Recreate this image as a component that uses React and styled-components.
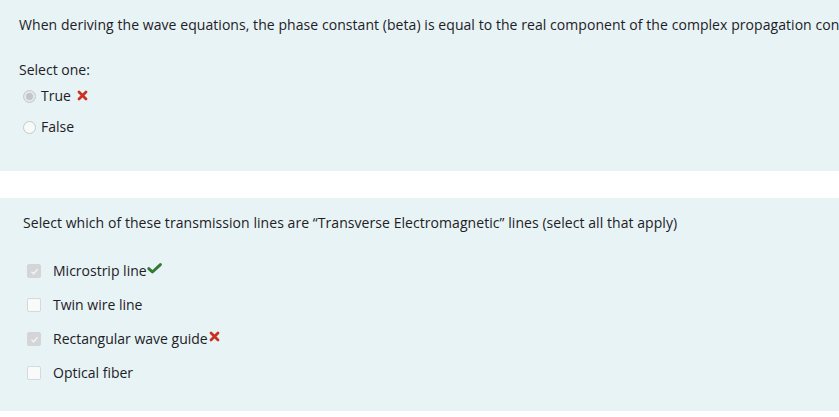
// Libraries
import styled, { createGlobalStyle } from "styled-components";

const GlobalStyle = createGlobalStyle`
  html, body {
    margin: 0;
    padding: 0;
    background-color: #ffffff;
  }

  body {
    font-family: "Open Sans", "Noto Sans", sans-serif;
    color: #1d2125;
    overflow: hidden;
  }
`;

// Styling
const Page = styled.main`
  display: flex;
  flex-direction: column;
  gap: 27px;
  width: 839px;
  height: 417px;
`;

const Card = styled.section`
  background-color: #e7f3f5;
  height: ${({ height }) => height}px;
  padding: ${({ pad }) => pad};
  box-sizing: border-box;
  overflow: hidden;
`;

const Prompt = styled.p`
  margin: 0;
  font-size: 14px;
  letter-spacing: 0.06px;
  line-height: 20px;
  white-space: nowrap;
`;

const Hint = styled.p`
  margin: 25px 0 0;
  font-size: 14px;
  line-height: 20px;
`;

const Options = styled.div`
  display: flex;
  flex-direction: column;
  gap: ${({ gap }) => gap}px;
  margin-top: ${({ top }) => top}px;
  padding-left: ${({ indent }) => indent}px;
`;

const Option = styled.label`
  display: flex;
  align-items: center;
  height: 20px;
  gap: ${({ gap }) => gap}px;
  font-size: 14px;
  line-height: 20px;
`;

const Text = styled.span`
  display: inline-flex;
  align-items: center;
`;

const Radio = styled.span`
  display: inline-flex;
  align-items: center;
  justify-content: center;
  width: 11px;
  height: 11px;
  border-radius: 50%;
  border: 1px solid #c6c9cb;
  background-color: ${({ checked }) => (checked ? "#e4e6e7" : "#f8f9f9")};

  &::after {
    content: "";
    display: ${({ checked }) => (checked ? "block" : "none")};
    width: 7px;
    height: 7px;
    border-radius: 50%;
    background-color: #c3c6c8;
  }
`;

const Box = styled.span`
  display: inline-flex;
  align-items: center;
  justify-content: center;
  width: 12px;
  height: 12px;
  border-radius: 2px;
  border: 1px solid ${({ checked }) => (checked ? "#d3d5d6" : "#d6d8da")};
  background-color: ${({ checked }) => (checked ? "#d3d5d6" : "#f9fafa")};
`;

const Mark = styled.svg`
  display: block;
  margin-left: ${({ gap }) => gap}px;
  transform: translateY(${({ lift }) => lift}px);
  flex-shrink: 0;
`;

function Cross({ gap, lift }) {
  return (
    <Mark gap={gap} lift={lift} width="11" height="11" viewBox="0 0 11 11">
      <path
        d="M2 2 L9 9 M9 2 L2 9"
        stroke="#ca3120"
        strokeWidth="2.8"
        strokeLinecap="round"
      />
    </Mark>
  );
}

function Tick({ gap, lift }) {
  return (
    <Mark gap={gap} lift={lift} width="15" height="11" viewBox="0 0 15 11">
      <path
        d="M1.8 5.6 L5.4 9 L13.4 1.6"
        fill="none"
        stroke="#357a32"
        strokeWidth="2.9"
        strokeLinejoin="round"
        strokeLinecap="round"
      />
    </Mark>
  );
}

function BoxTick() {
  return (
    <svg width="9" height="9" viewBox="0 0 9 9">
      <path
        d="M1.5 4.8 L3.6 6.8 L7.6 2.2"
        fill="none"
        stroke="#f2f3f3"
        strokeWidth="1.5"
      />
    </svg>
  );
}

const choices = [
  { label: "Microstrip line", checked: true, mark: "ok" },
  { label: "Twin wire line", checked: false },
  { label: "Rectangular wave guide", checked: true, mark: "bad" },
  { label: "Optical fiber", checked: false },
];

function App() {
  return (
    <>
      <GlobalStyle />
      <Page>
        <Card height={171} pad="15px 0 0 19px">
          <Prompt>
            When deriving the wave equations, the phase constant (beta) is
            equal to the real component of the complex propagation constant
            (gamma).
          </Prompt>
          <Hint>Select one:</Hint>
          <Options gap={11} top={6} indent={4}>
            <Option gap={5}>
              <Radio checked />
              <Text>
                True
                <Cross gap={6} lift={-1} />
              </Text>
            </Option>
            <Option gap={5}>
              <Radio />
              <Text>False</Text>
            </Option>
          </Options>
        </Card>

        <Card height={213} pad="15px 0 0 23px">
          <Prompt>
            Select which of these transmission lines are “Transverse
            Electromagnetic” lines (select all that apply)
          </Prompt>
          <Options gap={14} top={28} indent={4}>
            {choices.map((c) => (
              <Option key={c.label} gap={12}>
                <Box checked={c.checked}>{c.checked && <BoxTick />}</Box>
                <Text>
                  {c.label}
                  {c.mark === "ok" && <Tick gap={0} lift={-3} />}
                  {c.mark === "bad" && <Cross gap={1} lift={-3} />}
                </Text>
              </Option>
            ))}
          </Options>
        </Card>
      </Page>
    </>
  );
}

export default App;
